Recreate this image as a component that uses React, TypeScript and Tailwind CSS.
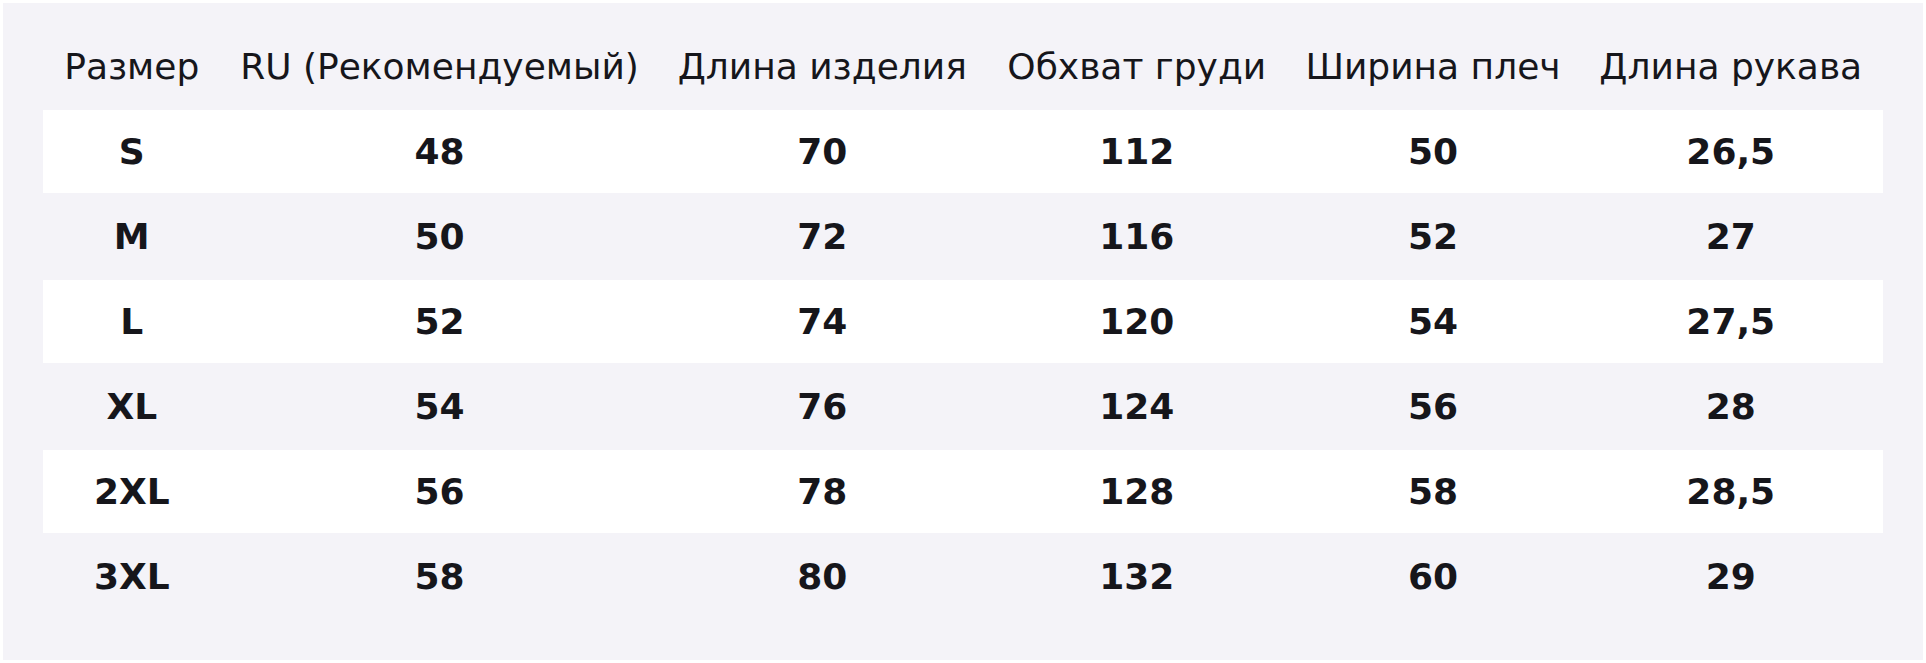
import React from "react";

const headers = [
  "Размер",
  "RU (Рекомендуемый)",
  "Длина изделия",
  "Обхват груди",
  "Ширина плеч",
  "Длина рукава",
];

const rows: string[][] = [
  ["S", "48", "70", "112", "50", "26,5"],
  ["M", "50", "72", "116", "52", "27"],
  ["L", "52", "74", "120", "54", "27,5"],
  ["XL", "54", "76", "124", "56", "28"],
  ["2XL", "56", "78", "128", "58", "28,5"],
  ["3XL", "58", "80", "132", "60", "29"],
];

const cols =
  "grid grid-cols-[177.5px_438px_327.5px_301.5px_291px_304.5px] items-center";

export default function App() {
  return (
    <div className="w-[1926px] h-[663px] bg-white p-[3px] font-['DejaVu_Sans',sans-serif] text-[#16161b]">
      <div className="h-full bg-[#f4f3f8] pt-[20px] px-[40px] pb-[40px]">
        <div className={`${cols} h-[87px]`}>
          {headers.map((h) => (
            <div key={h} className="text-center text-[36px] leading-none whitespace-nowrap">
              {h}
            </div>
          ))}
        </div>
        {rows.map((r, i) => (
          <div
            key={r[0]}
            className={`${cols} ${i % 2 === 0 ? "bg-white h-[83px]" : "h-[87px]"}`}
          >
            {r.map((c, j) => (
              <div key={j} className="text-center text-[36px] font-bold leading-none">
                {c}
              </div>
            ))}
          </div>
        ))}
      </div>
    </div>
  );
}
